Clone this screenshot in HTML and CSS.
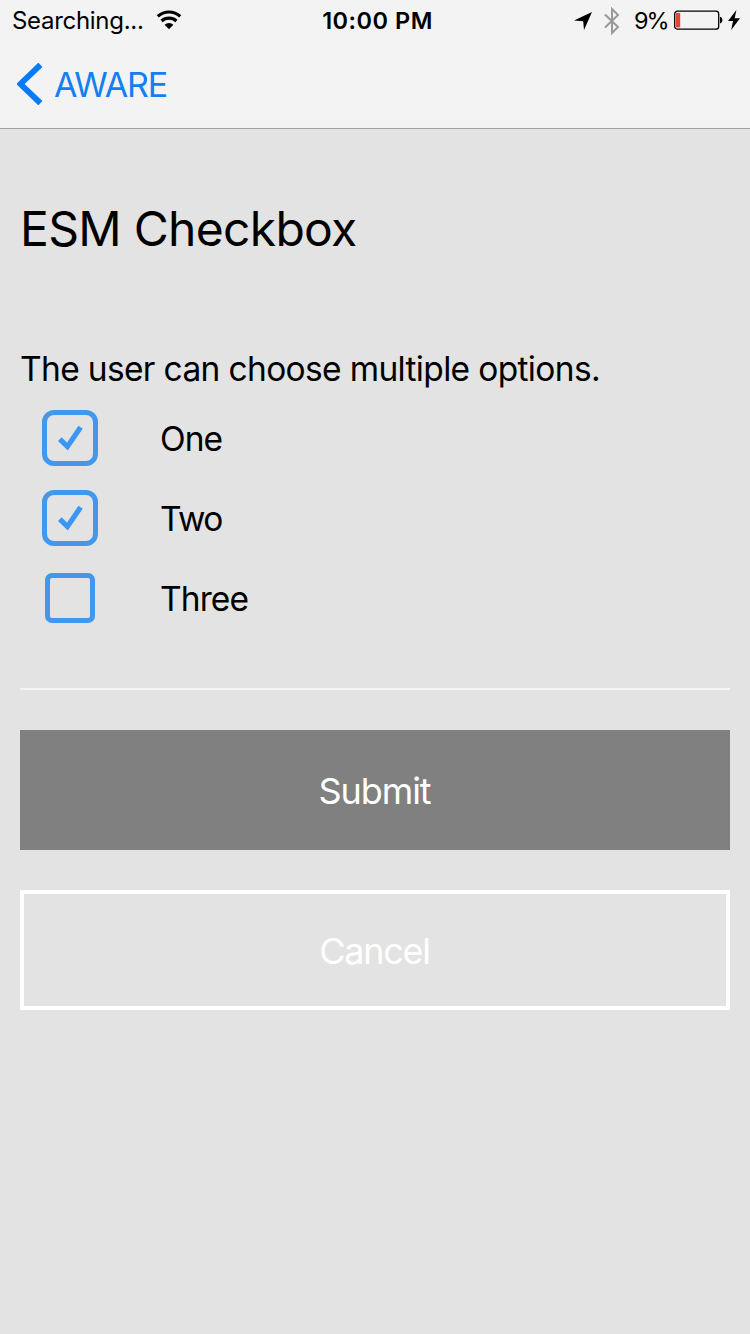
FILE: index.html
```html
<!DOCTYPE html>
<html lang="en">
<head>
<meta charset="utf-8">
<title>ESM Checkbox</title>
<link rel="stylesheet" href="styles.css">
</head>
<body>
<header class="top">
  <div class="status">
    <div class="status-left">
      <span class="carrier">Searching...</span>
      <svg class="wifi" width="26" height="20" viewBox="0 0 26 20"><g fill="none" stroke="#000" stroke-width="3.2"><path d="M1.8 6.4a16.5 16.5 0 0 1 22.4 0"/><path d="M5.6 11a11 11 0 0 1 14.8 0"/></g><path d="M8.6 14.7a6.3 6.3 0 0 1 8.8 0L13 19.2z"/></svg>
    </div>
    <span class="time">10:00 PM</span>
    <div class="status-right">
      <svg class="location" width="18" height="18" viewBox="0 0 18 18"><path d="M18 0 10 18 9.2 9.2 0 8.5z"/></svg>
      <svg class="bluetooth" width="16" height="28" viewBox="0 0 16 28"><path d="M1 7.5 14 20 8 26V2l6 6L1 20.5" fill="none" stroke="#999" stroke-width="2"/></svg>
      <span class="percent">9%</span>
      <svg class="battery" width="50" height="20" viewBox="0 0 50 20"><rect x=".7" y="1.2" width="44" height="18" rx="2.8" fill="none" stroke="#000" stroke-width="1.3"/><path fill="#e8423c" d="M2 3h4.2v14.4H2z"/><path d="M46 6.8c3.2.6 3.2 6.2 0 6.8z"/></svg>
      <svg class="bolt" width="12" height="20" viewBox="0 0 12 20"><path d="M8.4 0 0 11h5L3.2 20 12 8.3H6.7z"/></svg>
    </div>
  </div>
  <nav class="nav">
    <svg class="chevron" width="26" height="42" viewBox="0 0 26 42"><path d="M23.4 1.8 3.5 21l19.9 19.2" fill="none" stroke="#077bf5" stroke-width="5.9"/></svg>
    <a class="back">AWARE</a>
  </nav>
</header>
<main class="content">
  <h1 class="title">ESM Checkbox</h1>
  <p class="prompt">The user can choose multiple options.</p>
  <ul class="options">
    <li class="option"><span class="slot"><span class="box checked"><svg width="28" height="28" viewBox="0 0 28 28"><path d="M3.8 15.2 11.4 22.6 24.6 3.2" fill="none" stroke="#3b97f3" stroke-width="5.2"/></svg></span></span><span class="label one">One</span></li>
    <li class="option"><span class="slot"><span class="box checked"><svg width="28" height="28" viewBox="0 0 28 28"><path d="M3.8 15.2 11.4 22.6 24.6 3.2" fill="none" stroke="#3b97f3" stroke-width="5.2"/></svg></span></span><span class="label two">Two</span></li>
    <li class="option"><span class="slot"><span class="box"></span></span><span class="label three">Three</span></li>
  </ul>
  <hr class="rule">
  <button class="button submit">Submit</button>
  <button class="button cancel">Cancel</button>
</main>
</body>
</html>
```
FILE: styles.css
```css
* { box-sizing: border-box; }
body {
  margin: 0;
  min-height: 1334px;
  background: #e3e3e3;
  color: #000;
  font-family: Inter, "Liberation Sans", sans-serif;
}
svg { display: block; flex: none; }
.top {
  height: 129px;
  background: #f3f3f3;
  border-bottom: 1px solid #a2a2a2;
}
.status {
  display: grid;
  grid-template-columns: 1fr auto 1fr;
  height: 42px;
  font-size: 24px;
  line-height: 42px;
  white-space: nowrap;
}
.status-left, .status-right { display: flex; align-items: center; }
.status-left { padding-left: 12px; }
.carrier { width: 144px; letter-spacing: -0.3px; }
.wifi { margin-top: -3px; }
.time { padding-left: 5px; font-weight: 600; font-size: 23.5px; letter-spacing: 0.5px; }
.status-right { justify-content: flex-end; padding-right: 10px; }
.location { margin: -1px 12px 0 0; }
.bluetooth { margin: -1px 14px 0 0; }
.percent { width: 40px; font-size: 23.5px; letter-spacing: -2px; }
.battery { margin: -2px 4px 0 0; }
.bolt { margin-top: -2px; }
.nav {
  display: flex;
  align-items: center;
  height: 84px;
  padding-left: 17px;
  color: #137ff0;
}
.back {
  margin: 1px 0 0 11px;
  font-size: 34px;
  line-height: 40px;
  letter-spacing: -1.2px;
}
.content { padding: 71px 20px 0; }
.title {
  margin: 0;
  font-size: 48px;
  font-weight: 400;
  line-height: 58px;
  letter-spacing: -0.7px;
}
.prompt {
  margin: 91px 0 0;
  font-size: 33.5px;
  line-height: 40px;
  letter-spacing: -0.65px;
  white-space: nowrap;
}
.options { margin: 9px 0 0; padding: 0; list-style: none; }
.option { display: flex; align-items: center; height: 80px; }
.slot { display: flex; justify-content: center; width: 100px; margin-right: 40px; }
.box {
  display: flex;
  align-items: center;
  justify-content: center;
  width: 50px;
  height: 50px;
  border: 5px solid #4297ee;
  border-radius: 7px;
}
.checked { width: 56px; height: 56px; padding-bottom: 1px; border-radius: 12px; }
.label { padding-top: 2px; font-size: 33.5px; line-height: 40px; letter-spacing: -0.9px; }
.two { letter-spacing: -1.6px; }
.rule { height: 2px; margin: 50px 0 40px; border: 0; background: #f4f4f4; }
.button {
  display: block;
  width: 100%;
  height: 120px;
  margin: 0 0 40px;
  padding: 2px 1px 0 0;
  border: 4px solid #fff;
  border-radius: 0;
  background: transparent;
  color: #fff;
  font: 36px/44px Inter, "Liberation Sans", sans-serif;
  letter-spacing: -1.1px;
}
.submit { border-color: #808080; background: #808080; }
.cancel { letter-spacing: -1.3px; }
```
